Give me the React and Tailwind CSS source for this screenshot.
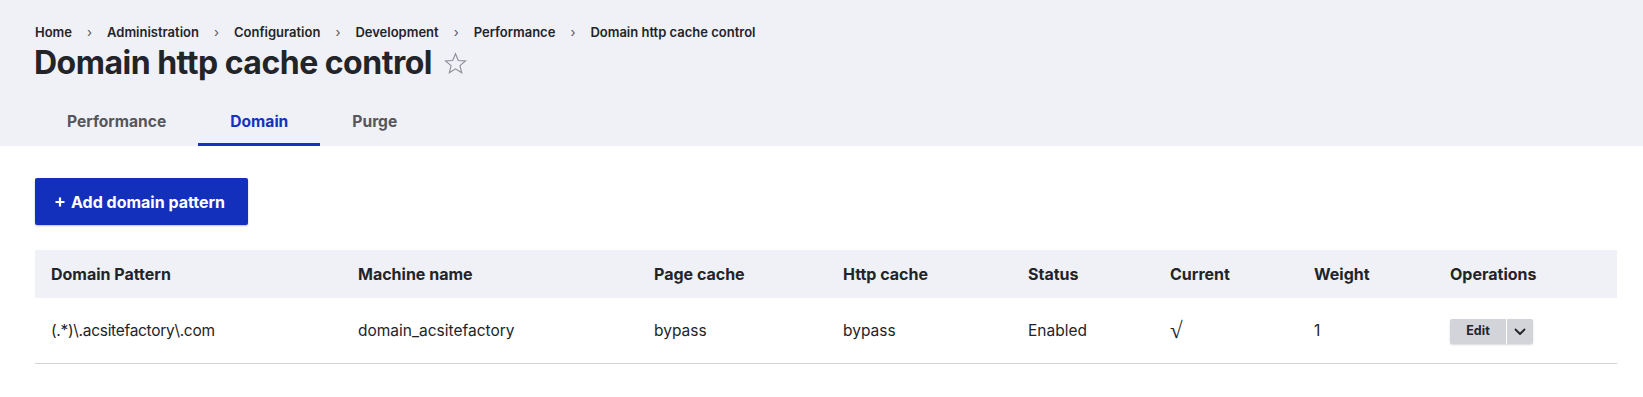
import React from 'react';

const crumbs = ['Home', 'Administration', 'Configuration', 'Development', 'Performance', 'Domain http cache control'];

const tabs = [
  { label: 'Performance', active: false },
  { label: 'Domain', active: true },
  { label: 'Purge', active: false },
];

const columns = [
  { label: 'Domain Pattern', width: 'w-[307px]' },
  { label: 'Machine name', width: 'w-[296px]' },
  { label: 'Page cache', width: 'w-[189px]' },
  { label: 'Http cache', width: 'w-[185px]' },
  { label: 'Status', width: 'w-[142px]' },
  { label: 'Current', width: 'w-[144px]' },
  { label: 'Weight', width: 'w-[136px]' },
  { label: 'Operations', width: '' },
];

const rows = [
  {
    pattern: '(.*)\\.acsitefactory\\.com',
    machine: 'domain_acsitefactory',
    page: 'bypass',
    http: 'bypass',
    status: 'Enabled',
    current: '√',
    weight: '1',
  },
];

const Star = () => (
  <svg width="23" height="23" viewBox="0 0 24 24" fill="none" className="ml-[12px]">
    <path
      d="M12 1.8l2.9 7.1 7.6.5-5.9 4.9 1.9 7.4L12 17.6l-6.5 4.1 1.9-7.4-5.9-4.9 7.6-.5z"
      stroke="#8a8c94"
      strokeWidth="1.1"
      strokeLinejoin="miter"
    />
  </svg>
);

const DropButton = () => (
  <div className="inline-flex h-[25px] rounded-[2px] bg-[#d3d4d9] shadow-[0_1px_2px_rgba(0,0,0,0.15)]">
    <button className="w-[56px] text-[12.5px] font-bold text-[#232429] leading-none">Edit</button>
    <span className="w-px bg-white" />
    <button className="w-[26px] flex items-center justify-center">
      <svg width="12" height="8" viewBox="0 0 12 8" fill="none">
        <path d="M1.5 1.5 6 6l4.5-4.5" stroke="#232429" strokeWidth="1.8" strokeLinecap="round" strokeLinejoin="round" />
      </svg>
    </button>
  </div>
);

const App = () => {
  return (
    <div className="min-h-[397px] bg-white text-[#232429] font-['Inter','Liberation_Sans',sans-serif]">
      <header className="bg-[#f0f1f6] h-[146px] flex flex-col">
        <nav className="pl-[35px] pt-[24px] flex items-center h-[41px] text-[13px] font-semibold">
          {crumbs.map((c, i) => (
            <React.Fragment key={c}>
              {i > 0 && <span className="px-[15px] text-[#55565b] font-normal">›</span>}
              <span>{c}</span>
            </React.Fragment>
          ))}
        </nav>
        <div className="pl-[34px] flex items-center h-[44px]">
          <h1 className="text-[32px] font-bold tracking-[-0.5px] leading-none">Domain http cache control</h1>
          <Star />
        </div>
        <ul className="mt-auto pl-[35px] flex h-[49px]">
          {tabs.map((t) => (
            <li
              key={t.label}
              className={
                t.active
                  ? 'px-8 flex items-center text-[15.6px] font-bold text-[#1431bf] border-b-[3px] border-[#1431bf] pt-[3px]'
                  : 'px-8 flex items-center text-[15.6px] font-bold text-[#55565b]'
              }
            >
              {t.label}
            </li>
          ))}
        </ul>
      </header>

      <main className="pl-[35px] pr-[26px] pt-[32px]">
        <button className="h-[47px] pl-[20px] pr-[23px] rounded-[2px] bg-[#1330bd] text-white text-[16px] font-bold shadow-[0_1px_2px_rgba(0,0,0,0.25)] flex items-center">
          <svg width="10" height="10" viewBox="0 0 10 10" className="mr-[6px]">
            <path d="M5 0.5v9M0.5 5h9" stroke="white" strokeWidth="2.2" />
          </svg>
          Add domain pattern
        </button>

        <table className="mt-[25px] w-full table-fixed border-collapse text-left">
          <thead>
            <tr className="bg-[#f0f1f6] h-[48px]">
              {columns.map((c) => (
                <th key={c.label} className={`${c.width} pl-4 text-[16px] font-bold`}>
                  {c.label}
                </th>
              ))}
            </tr>
          </thead>
          <tbody>
            {rows.map((r) => (
              <tr key={r.machine} className="h-[65px] border-b border-[#d3d4d9] text-[15.5px]">
                <td className="pl-4 tracking-[-0.3px]">{r.pattern}</td>
                <td className="pl-4">{r.machine}</td>
                <td className="pl-4">{r.page}</td>
                <td className="pl-4">{r.http}</td>
                <td className="pl-4">{r.status}</td>
                <td className="pl-4 font-['Liberation_Serif',serif] text-[23px] leading-none">{r.current}</td>
                <td className="pl-4">{r.weight}</td>
                <td className="pl-4 pt-[2px]">
                  <DropButton />
                </td>
              </tr>
            ))}
          </tbody>
        </table>
      </main>
    </div>
  );
};

export default App;
